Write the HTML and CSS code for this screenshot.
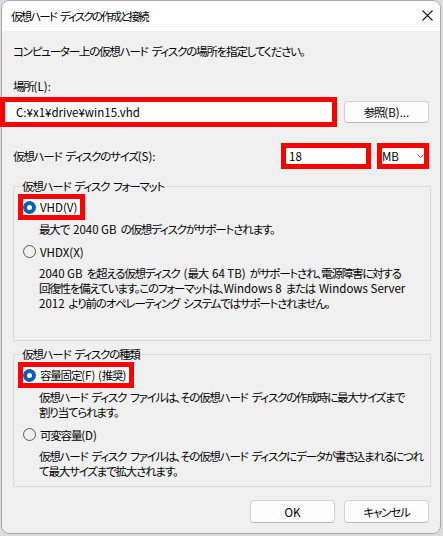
FILE: index.html
```html
<!DOCTYPE html>
<html lang="ja">
<head>
<meta charset="utf-8">
<title>仮想ハード ディスクの作成と接続</title>
<link rel="stylesheet" href="styles.css">
</head>
<body>
<div class="window">
  <div class="titlebar">
    <span class="title">仮想ハード ディスクの作成と接続</span>
    <svg class="close" width="11" height="11" viewBox="0 0 11 11"><path d="M0.5 0.5L10.5 10.5M10.5 0.5L0.5 10.5" stroke="#1a1a1a" stroke-width="1.1" fill="none"/></svg>
  </div>
  <div class="content">
    <p class="intro">コンピューター上の仮想ハード ディスクの場所を指定してください。</p>
    <p class="field-label">場所<span class="en">(L):</span></p>
    <div class="path-row">
      <div class="mark path-box en">C:¥x1¥drive¥win15.vhd</div>
      <button class="btn browse">参照<span class="en">(B)...</span></button>
    </div>
    <div class="size-row">
      <span class="size-label">仮想ハード ディスクのサイズ<span class="en">(S):</span></span>
      <div class="mark size-box en">18</div>
      <div class="mark unit-box"><span class="en">MB</span><svg class="chevron" width="7" height="4" viewBox="0 0 7 4"><path d="M0.5 0.5L3.5 3.5L6.5 0.5" stroke="#606060" stroke-width="1" fill="none"/></svg></div>
    </div>
    <fieldset class="group group-format">
      <legend>仮想ハード ディスク フォーマット</legend>
      <div class="option mark"><span class="radio checked"></span><span class="en">VHD(V)</span></div>
      <p class="desc">最大で <span class="en">2040 GB</span> の仮想ディスクがサポートされます。</p>
      <div class="option"><span class="radio"></span><span class="en">VHDX(X)</span></div>
      <p class="desc"><span class="en">2040 GB</span> を超える仮想ディスク <span class="en">(</span>最大 <span class="en">64 TB)</span> がサポートされ、電源障害に対する<br>回復性を備えています。このフォーマットは、<span class="en">Windows 8</span> または <span class="en">Windows Server</span><br><span class="en">2012</span> より前のオペレーティング システムではサポートされません。</p>
    </fieldset>
    <fieldset class="group group-type">
      <legend>仮想ハード ディスクの種類</legend>
      <div class="option mark"><span class="radio checked"></span>容量固定<span class="en">(F) (</span>推奨<span class="en">)</span></div>
      <p class="desc">仮想ハード ディスク ファイルは、その仮想ハード ディスクの作成時に最大サイズまで<br>割り当てられます。</p>
      <div class="option"><span class="radio"></span>可変容量<span class="en">(D)</span></div>
      <p class="desc">仮想ハード ディスク ファイルは、その仮想ハード ディスクにデータが書き込まれるにつれ<br>て最大サイズまで拡大されます。</p>
    </fieldset>
    <div class="buttons">
      <button class="btn"><span class="en">OK</span></button>
      <button class="btn">キャンセル</button>
    </div>
  </div>
</div>
</body>
</html>
```
FILE: styles.css
```css
* { box-sizing: border-box; }
html, body { margin: 0; padding: 0; }
body {
  background: #dcdcdc;
  font-family: "Noto Sans CJK JP", "Noto Sans", sans-serif;
  font-size: 11.5px;
  line-height: 15px;
  letter-spacing: -1.2px;
  word-spacing: 2.6px;
  color: #000;
  font-feature-settings: "palt" 1;
}
.en { letter-spacing: 0; word-spacing: 0; }
.window {
  margin-left: 1px;
  width: 440px;
  height: 534px;
  border: 1px solid #a9a9a9;
  border-radius: 8px;
  background: #f0f0f0;
  display: flex;
  flex-direction: column;
}
.titlebar {
  height: 30px;
  flex: none;
  background: #fff;
  border-radius: 7px 7px 0 0;
  display: flex;
  align-items: center;
  padding-left: 9px;
}
.title { letter-spacing: -1.9px; word-spacing: 3.2px; }
.close { margin-left: auto; margin-right: 7px; margin-top: -2px; }
.content {
  display: flex;
  flex-direction: column;
  padding: 0 9px 0 11px;
}
p { margin: 0; }
.intro { margin-top: 13px; }
.field-label { margin-top: 20px; }
.mark {
  border: 5px solid #ff0000;
  background: #fff;
}
.path-row {
  margin-top: 3px;
  display: flex;
  align-items: center;
}
.path-box {
  margin-left: -13px;
  width: 337px;
  height: 30px;
  line-height: 20px;
  padding-left: 11px;
}
.btn {
  font-family: inherit;
  font-size: 11.5px;
  letter-spacing: -1.2px;
  font-feature-settings: "palt" 1;
  color: #000;
  height: 23px;
  width: 85px;
  padding: 0;
  background: #fdfdfd;
  border: 1px solid #d2d2d2;
  border-bottom-color: #bdbdbd;
  border-radius: 4px;
}
.browse { margin-left: auto; margin-right: 2px; height: 22px; }
.size-row {
  margin-top: 16px;
  display: flex;
  align-items: center;
}
.size-label { flex: 1; }
.size-box {
  width: 90px;
  height: 26px;
  line-height: 16px;
  padding-left: 3px;
}
.unit-box {
  margin-left: 6px;
  margin-right: 2px;
  width: 52px;
  height: 26px;
  line-height: 16px;
  display: flex;
  align-items: center;
}
.chevron { margin-left: auto; }
.group {
  margin: 0;
  min-width: 0;
  border: 1px solid #dcdcdc;
  padding: 0 8px 0 4px;
}
.group legend {
  margin-left: 2px;
  padding: 0 2px;
  line-height: 15px;
}
.group-format { margin-top: 10px; padding-bottom: 27px; }
.group-type { margin-top: 6px; padding-bottom: 5px; }
.option {
  align-self: flex-start;
  display: inline-flex;
  align-items: center;
  height: 26px;
  line-height: 16px;
  border: 5px solid transparent;
  padding-right: 3px;
}
.option.mark { border-color: #ff0000; background: #fff; }
.radio {
  width: 13px;
  height: 13px;
  border-radius: 50%;
  border: 1px solid #5a5a5a;
  margin-right: 4px;
  flex: none;
}
.radio.checked {
  border: none;
  background: #fff;
  box-shadow: inset 0 0 0 4px #005fb8;
}
.desc {
  margin-left: 21px;
  margin-top: 1.5px;
  margin-bottom: 2px;
  white-space: nowrap;
}
.buttons {
  margin-top: 13px;
  display: flex;
  justify-content: flex-end;
  gap: 9px;
  padding-right: 2px;
}
```
